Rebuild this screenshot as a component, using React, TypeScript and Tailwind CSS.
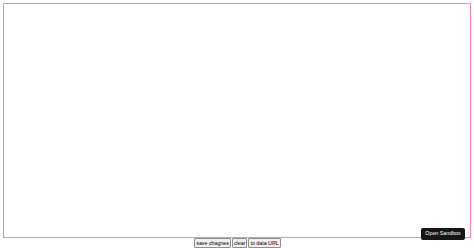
import React from "react";

export default function App() {
  return (
    <div className="relative w-[474px] h-[248px] bg-white overflow-hidden" style={{ fontFamily: '"Liberation Sans", Arial, sans-serif' }}>
      <div className="ml-[3px] mt-[3px] w-[468px] h-[235px] border border-[#f08cb0]" />
      <div className="flex justify-center gap-[1px] pl-[1px]">
        <button className="h-[10px] px-[1px] text-[5.3px] leading-[8px] text-black bg-[#efefef] border border-[#8f8f8f] rounded-[1px]">save chagnes</button>
        <button className="h-[10px] px-[1px] text-[5.3px] leading-[8px] text-black bg-[#efefef] border border-[#8f8f8f] rounded-[1px]">clear</button>
        <button className="h-[10px] px-[1px] text-[5.3px] leading-[8px] text-black bg-[#efefef] border border-[#8f8f8f] rounded-[1px]">to data URL</button>
      </div>
      <div className="absolute left-[421px] top-[228px] w-[44px] h-[12px] bg-[#151515] rounded-[2px] flex items-center justify-center text-white text-[5.3px]">
        Open Sandbox
      </div>
    </div>
  );
}
